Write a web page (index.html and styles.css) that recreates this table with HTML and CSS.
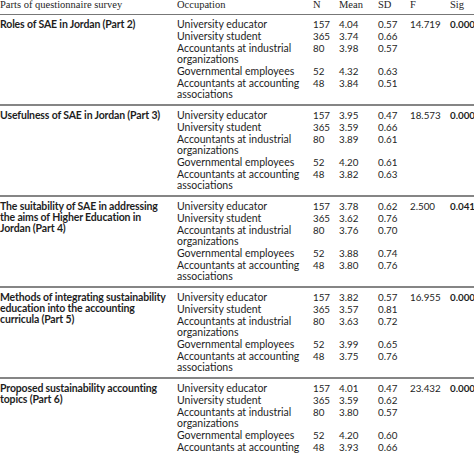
FILE: index.html
```html
<!DOCTYPE html>
<html>
<head>
<meta charset="utf-8">
<link rel="stylesheet" href="styles.css">
</head>
<body>
<div class="frame">
<table class="anova">
  <colgroup>
    <col class="c-part"><col class="c-occ"><col class="c-n"><col class="c-mean"><col class="c-sd"><col class="c-f"><col class="c-sig">
  </colgroup>
  <thead>
    <tr><th>Parts of questionnaire survey</th><th>Occupation</th><th>N</th><th>Mean</th><th>SD</th><th>F</th><th>Sig</th></tr>
  </thead>
  <tbody>
    <tr class="first"><td class="part" rowspan="5">Roles of SAE in Jordan (Part 2)</td><td class="occ">University educator</td><td>157</td><td>4.04</td><td>0.57</td><td rowspan="5" class="fv">14.719</td><td rowspan="5" class="sig">0.000</td></tr>
    <tr><td class="occ">University student</td><td>365</td><td>3.74</td><td>0.66</td></tr>
    <tr><td class="occ">Accountants at industrial organizations</td><td>80</td><td>3.98</td><td>0.57</td></tr>
    <tr><td class="occ">Governmental employees</td><td>52</td><td>4.32</td><td>0.63</td></tr>
    <tr class="last"><td class="occ">Accountants at accounting associations</td><td>48</td><td>3.84</td><td>0.51</td></tr>
  </tbody>
  <tbody>
    <tr class="first"><td class="part" rowspan="5">Usefulness of SAE in Jordan (Part 3)</td><td class="occ">University educator</td><td>157</td><td>3.95</td><td>0.47</td><td rowspan="5" class="fv">18.573</td><td rowspan="5" class="sig">0.000</td></tr>
    <tr><td class="occ">University student</td><td>365</td><td>3.59</td><td>0.66</td></tr>
    <tr><td class="occ">Accountants at industrial organizations</td><td>80</td><td>3.89</td><td>0.61</td></tr>
    <tr><td class="occ">Governmental employees</td><td>52</td><td>4.20</td><td>0.61</td></tr>
    <tr class="last"><td class="occ">Accountants at accounting associations</td><td>48</td><td>3.82</td><td>0.63</td></tr>
  </tbody>
  <tbody>
    <tr class="first"><td class="part" rowspan="5">The suitability of SAE in addressing the aims of Higher Education in Jordan (Part 4)</td><td class="occ">University educator</td><td>157</td><td>3.78</td><td>0.62</td><td rowspan="5" class="fv">2.500</td><td rowspan="5" class="sig">0.041</td></tr>
    <tr><td class="occ">University student</td><td>365</td><td>3.62</td><td>0.76</td></tr>
    <tr><td class="occ">Accountants at industrial organizations</td><td>80</td><td>3.76</td><td>0.70</td></tr>
    <tr><td class="occ">Governmental employees</td><td>52</td><td>3.88</td><td>0.74</td></tr>
    <tr class="last"><td class="occ">Accountants at accounting associations</td><td>48</td><td>3.80</td><td>0.76</td></tr>
  </tbody>
  <tbody>
    <tr class="first"><td class="part" rowspan="5">Methods of integrating sustainability education into the accounting curricula (Part 5)</td><td class="occ">University educator</td><td>157</td><td>3.82</td><td>0.57</td><td rowspan="5" class="fv">16.955</td><td rowspan="5" class="sig">0.000</td></tr>
    <tr><td class="occ">University student</td><td>365</td><td>3.57</td><td>0.81</td></tr>
    <tr><td class="occ">Accountants at industrial organizations</td><td>80</td><td>3.63</td><td>0.72</td></tr>
    <tr><td class="occ">Governmental employees</td><td>52</td><td>3.99</td><td>0.65</td></tr>
    <tr class="last"><td class="occ">Accountants at accounting associations</td><td>48</td><td>3.75</td><td>0.76</td></tr>
  </tbody>
  <tbody>
    <tr class="first"><td class="part" rowspan="5">Proposed sustainability accounting topics (Part 6)</td><td class="occ">University educator</td><td>157</td><td>4.01</td><td>0.47</td><td rowspan="5" class="fv">23.432</td><td rowspan="5" class="sig">0.000</td></tr>
    <tr><td class="occ">University student</td><td>365</td><td>3.59</td><td>0.62</td></tr>
    <tr><td class="occ">Accountants at industrial organizations</td><td>80</td><td>3.80</td><td>0.57</td></tr>
    <tr><td class="occ">Governmental employees</td><td>52</td><td>4.20</td><td>0.60</td></tr>
    <tr class="last"><td class="occ">Accountants at accounting associations</td><td>48</td><td>3.93</td><td>0.66</td></tr>
  </tbody>
</table>
</div>
</body>
</html>
```

FILE: styles.css
```css
html, body {
  margin: 0;
  padding: 0;
  background: #ffffff;
  overflow: hidden;
}
.frame {
  width: 474px;
  height: 453px;
  overflow: hidden;
}
.anova {
  table-layout: fixed;
  border-collapse: collapse;
  width: 530px;
  font-family: Lato, "Liberation Sans", sans-serif;
  font-size: 10.5px;
  line-height: 11px;
  color: #1e1e1e;
  margin-top: -1px;
}
.c-part { width: 177px; }
.c-occ { width: 136px; }
.c-n { width: 26px; }
.c-mean { width: 39px; }
.c-sd { width: 32px; }
.c-f { width: 40px; }
.c-sig { width: 80px; }
.anova th {
  font-family: "Liberation Serif", serif;
  font-weight: normal;
  font-size: 10.5px;
  text-align: left;
  padding: 0 0 4px 0;
  border-bottom: 1px solid #777777;
  white-space: nowrap;
}
.anova td {
  padding: 0 0 1px 0;
  vertical-align: top;
  text-align: left;
  font-size: 9.8px;
}
.anova tbody + tbody {
  border-top: 2px solid #858585;
}
.anova tr.first td {
  padding-top: 4px;
}
.anova tr.last td {
  padding-bottom: 4px;
}
.anova td.part {
  font-size: 10.5px;
  font-weight: bold;
  letter-spacing: -0.15px;
  padding-right: 5px;
}
.anova td.occ {
  font-size: 10.5px;
  padding-right: 5px;
}
.anova td.sig {
  font-weight: bold;
}
```
